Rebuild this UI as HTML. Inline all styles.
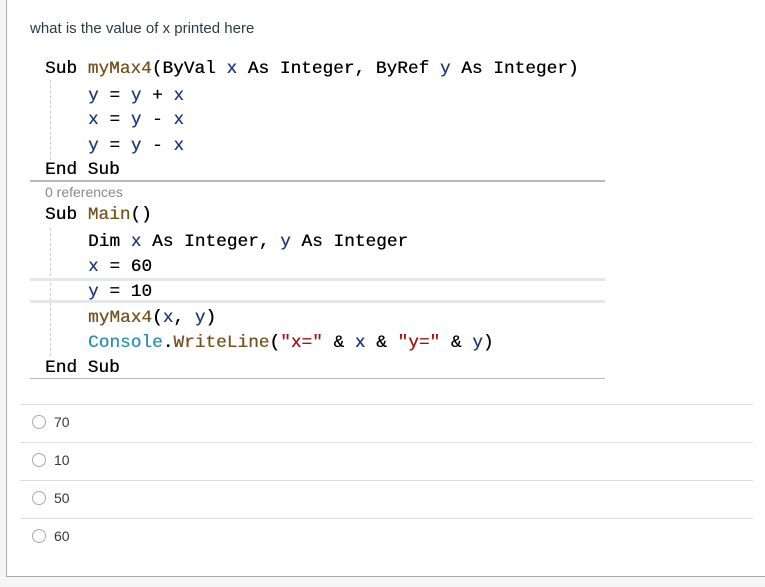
<!DOCTYPE html>
<html><head><meta charset="utf-8"><style>
html,body{margin:0;padding:0;width:765px;height:587px;background:#f5f5f5;overflow:hidden}
#box{position:absolute;left:6px;top:-2px;width:800px;height:578px;background:#fff;border-left:1px solid #aaa;border-bottom:1px solid #aaa}
.q{position:absolute;left:30px;top:20px;font:15px "Liberation Sans",sans-serif;color:#2d3b45}
.c{position:absolute;font:17.8px "Liberation Mono",monospace;color:#000;white-space:pre;line-height:20px;text-shadow:0.3px 0 0 currentColor}
.v{color:#1f377f}.m{color:#74531f}.t{color:#2b91af}.s{color:#a31515}
.hr{position:absolute;left:30px;width:575px;height:2px;background:#b8b8b8}
.hl{position:absolute;left:30px;width:575px;height:3px;background:#e6e6ee}
.ref{position:absolute;left:45px;top:184px;font:14px "Liberation Sans",sans-serif;color:#8a8a8a}
.g{position:absolute;left:50px;width:0;border-left:1px dashed #ccc}
.ol{position:absolute;left:20px;width:733px;height:1px;background:#ddd}
.op{position:absolute;left:32px;font:14px "Liberation Sans",sans-serif;color:#2d3b45}
.op i{display:inline-block;width:12px;height:12px;border:1px solid #aaa;border-radius:50%;vertical-align:-2px;margin-right:8px}
</style></head><body>
<div id="box"></div>
<div class="q">what is the value of x printed here</div>
<div class="g" style="top:80px;height:80px"></div>
<div class="g" style="top:228px;height:128px"></div>
<div class="c" style="left:45px;top:59px">Sub <span class="m">myMax4</span>(ByVal <span class="v">x</span> As Integer, ByRef <span class="v">y</span> As Integer)</div>
<div class="c" style="left:88px;top:86px"><span class="v">y</span> = <span class="v">y</span> + <span class="v">x</span></div>
<div class="c" style="left:88px;top:110px"><span class="v">x</span> = <span class="v">y</span> - <span class="v">x</span></div>
<div class="c" style="left:88px;top:136px"><span class="v">y</span> = <span class="v">y</span> - <span class="v">x</span></div>
<div class="c" style="left:45px;top:160px">End Sub</div>
<div class="hr" style="top:180px"></div>
<div class="ref">0 references</div>
<div class="c" style="left:45px;top:205px">Sub <span class="m">Main</span>()</div>
<div class="c" style="left:88px;top:232px">Dim <span class="v">x</span> As Integer, <span class="v">y</span> As Integer</div>
<div class="c" style="left:88px;top:257px"><span class="v">x</span> = 60</div>
<div class="hl" style="top:278px"></div>
<div class="c" style="left:88px;top:282px"><span class="v">y</span> = 10</div>
<div class="hl" style="top:300px"></div>
<div class="c" style="left:88px;top:308px"><span class="m">myMax4</span>(<span class="v">x</span>, <span class="v">y</span>)</div>
<div class="c" style="left:88px;top:333px"><span class="t">Console</span>.<span class="m">WriteLine</span>(<span class="s">"x="</span> &amp; <span class="v">x</span> &amp; <span class="s">"y="</span> &amp; <span class="v">y</span>)</div>
<div class="c" style="left:45px;top:358px">End Sub</div>
<div class="hr" style="top:378px;height:1px"></div>
<div class="ol" style="top:404px"></div>
<div class="op" style="top:414px"><i></i>70</div>
<div class="ol" style="top:442px"></div>
<div class="op" style="top:452px"><i></i>10</div>
<div class="ol" style="top:480px"></div>
<div class="op" style="top:490px"><i></i>50</div>
<div class="ol" style="top:518px"></div>
<div class="op" style="top:528px"><i></i>60</div>
</body></html>
